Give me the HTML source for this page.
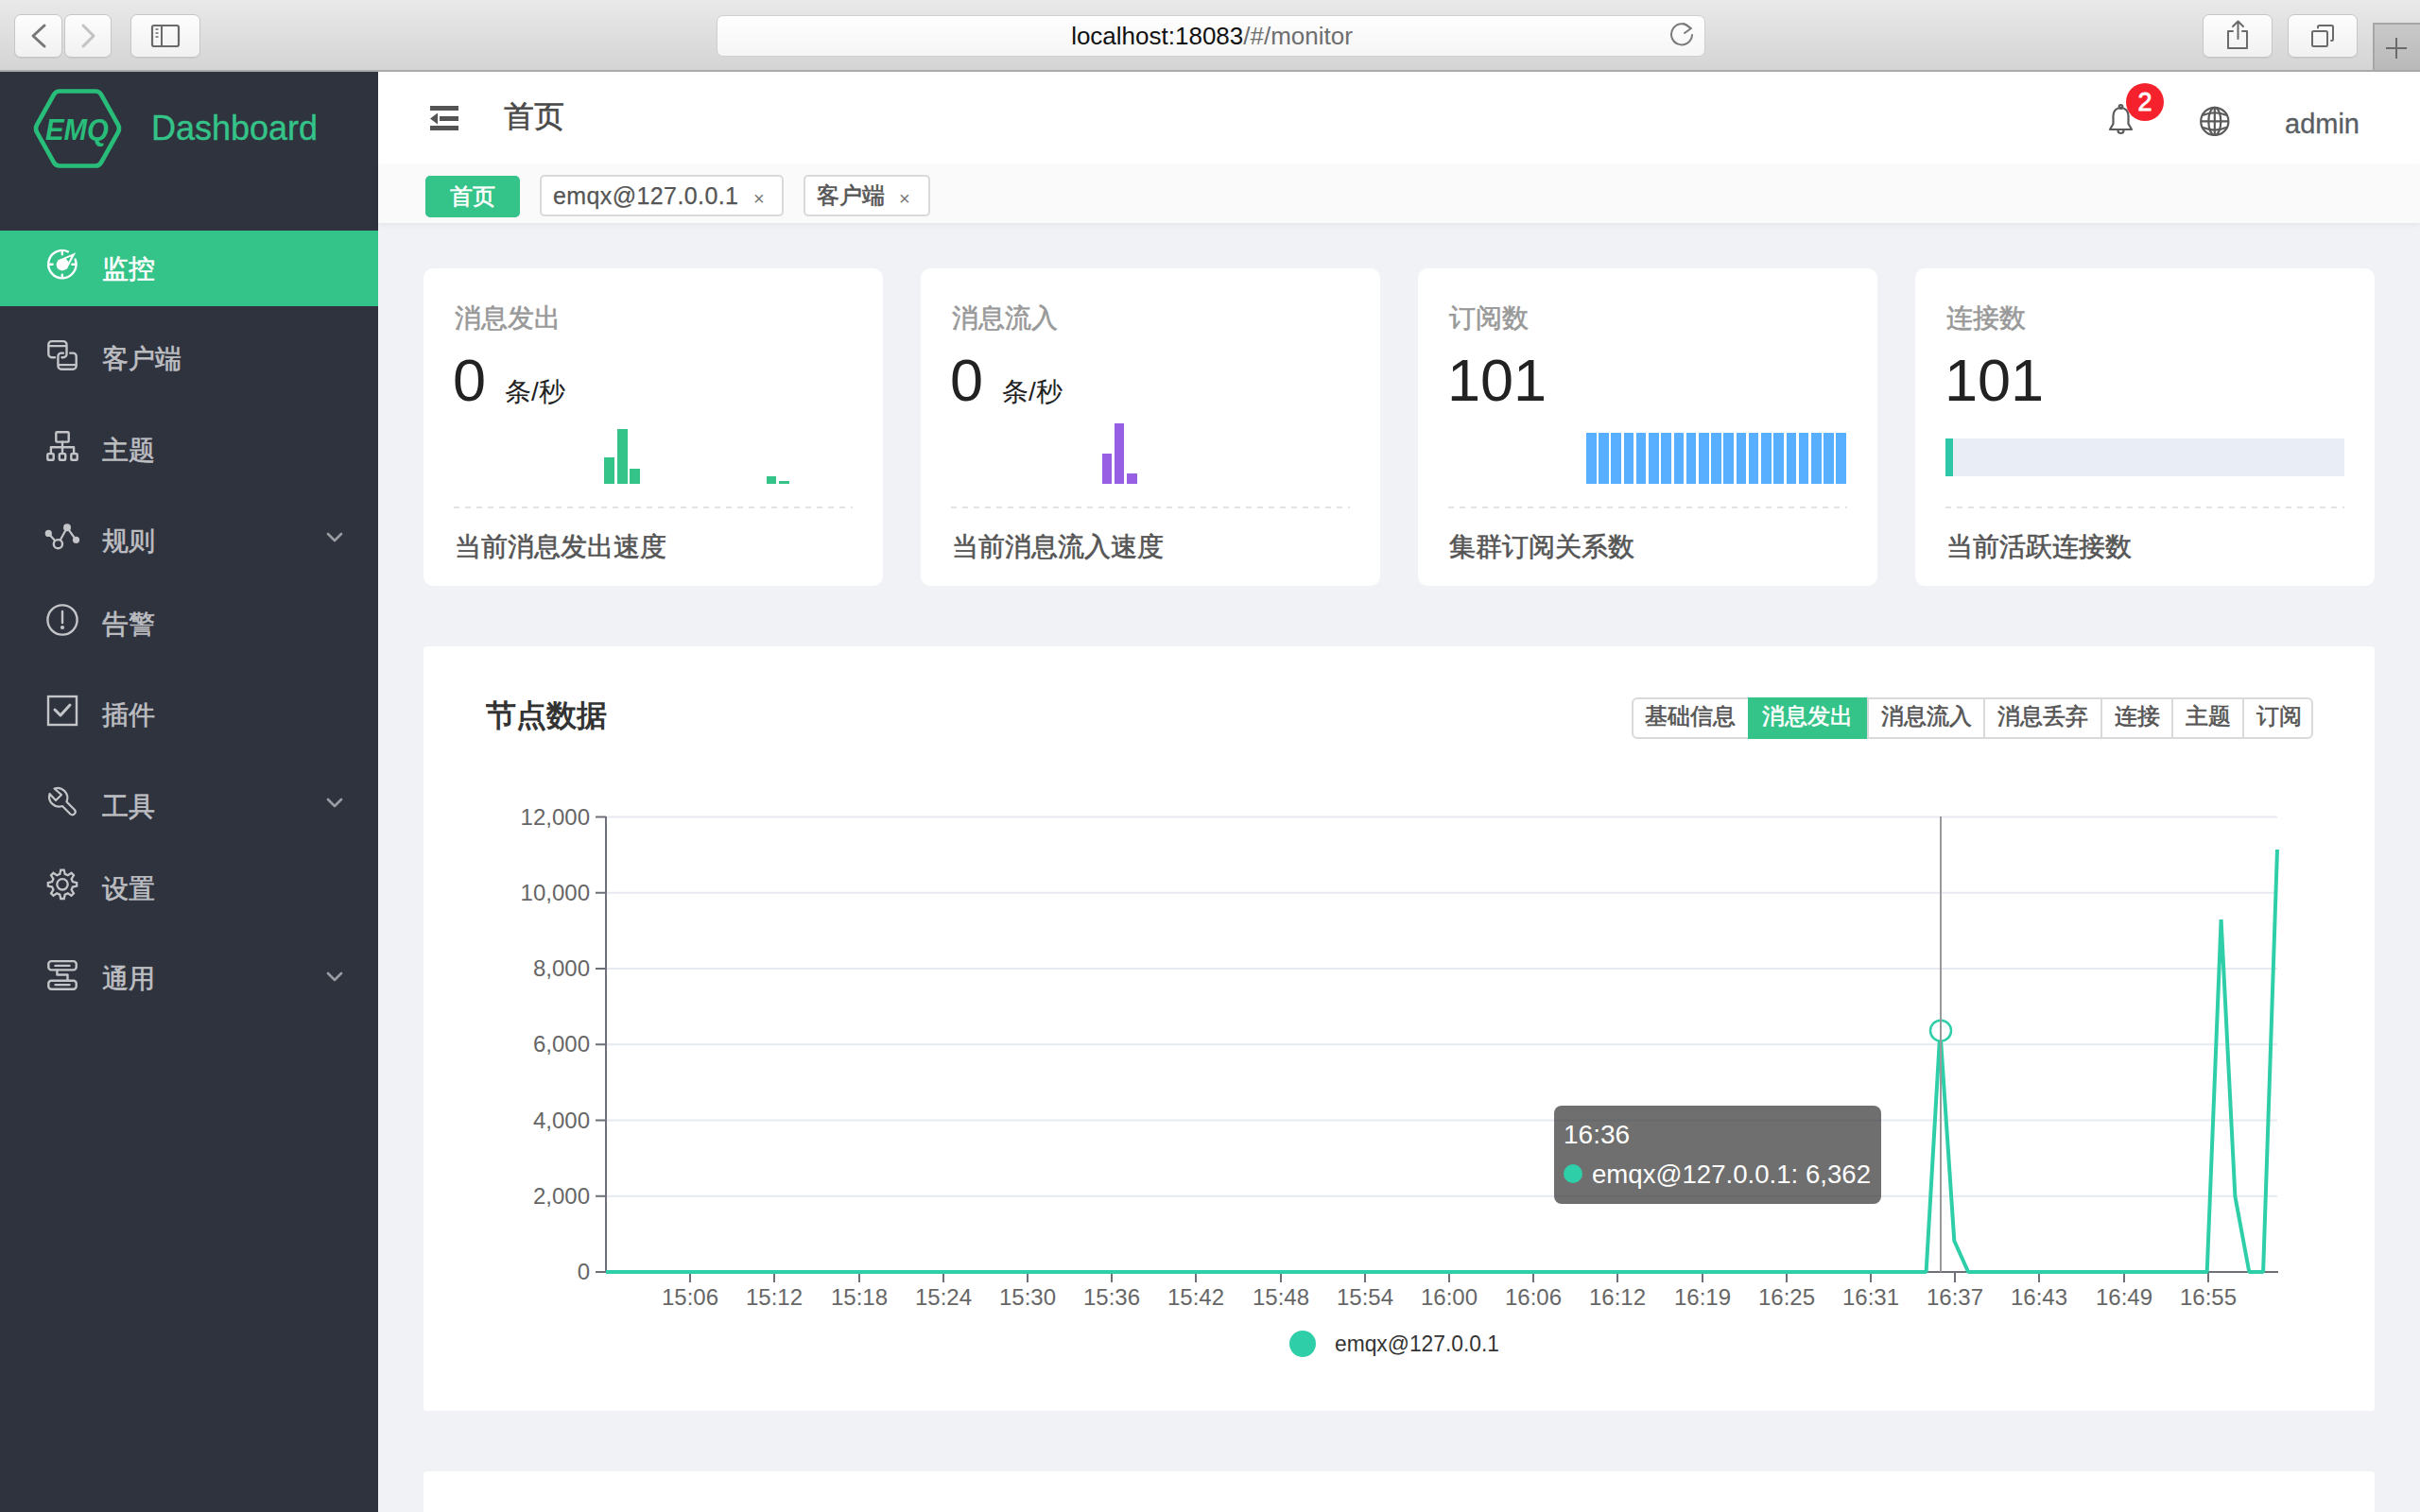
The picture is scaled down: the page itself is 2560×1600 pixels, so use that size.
<!DOCTYPE html>
<html><head><meta charset="utf-8">
<style>
*{margin:0;padding:0;box-sizing:border-box}
html,body{width:2560px;height:1600px;overflow:hidden;background:#f0f2f5;font-family:"Liberation Sans",sans-serif;position:relative}
.a{position:absolute}
/* safari toolbar */
#tb{left:0;top:0;width:2560px;height:74px;background:linear-gradient(#e9e9e9,#d4d4d4)}
#tbl{left:0;top:74px;width:2560px;height:2px;background:#a9a9a9}
.btn{border:1px solid #c6c6c6;border-radius:7px;background:linear-gradient(#fdfdfd,#f1f1f1);box-shadow:0 1px 0 rgba(0,0,0,0.06)}
#url{left:758px;top:16px;width:1046px;height:44px;border:1px solid #cfcfcf;border-radius:7px;background:linear-gradient(#fefefe,#f6f6f6)}
#urltxt{left:0;top:0;width:1046px;text-align:center;line-height:42px;font-size:26px;color:#111}
#urltxt span{color:#6e6e6e}
/* sidebar */
#sb{left:0;top:76px;width:400px;height:1524px;background:#2f333e}
.mi{left:0;width:400px;height:80px}
.mt{left:108px;font-size:28px;color:#bdbec2;line-height:40px}
.zh,.mt,.ct,.cb,.bg,.tag{-webkit-text-stroke-width:0.6px}
.ic{left:48px;width:36px;height:36px}
/* header */
#hd{left:400px;top:76px;width:2160px;height:98px;background:#fff}
#tags{left:400px;top:174px;width:2160px;height:62px;background:#fafafa;box-shadow:0 2px 6px rgba(0,0,0,0.06)}
.tag{height:44px;border:2px solid #d9d9d9;border-radius:5px;background:#fff;font-size:25px;color:#555;line-height:40px}
/* cards */
.card{background:#fff;border-radius:10px}
.ct{font-size:28px;color:#999;line-height:36px}
.cv{font-size:63px;color:#222;line-height:70px}
.cu{font-size:28px;color:#222;line-height:36px}
.cd{height:2px;background:repeating-linear-gradient(90deg,#e3e3e3 0 6px,transparent 6px 12px)}
.cb{font-size:28px;color:#555;line-height:36px}
.sg{font-size:24px;color:#666;line-height:30px}
.bg{height:44px;font-size:24px;color:#555;line-height:40px;text-align:center}
</style></head>
<body>
<div id="tb" class="a">
  <div class="a btn" style="left:15px;top:15px;width:51px;height:46px"></div>
  <div class="a btn" style="left:68px;top:15px;width:50px;height:46px"></div>
  <div class="a btn" style="left:138px;top:15px;width:74px;height:46px"></div>
  <div id="url" class="a"><div id="urltxt" class="a">localhost:18083<span>/#/monitor</span></div></div>
  <div class="a btn" style="left:2330px;top:15px;width:74px;height:46px"></div>
  <div class="a btn" style="left:2420px;top:15px;width:74px;height:46px"></div>
  <div class="a" style="left:2510px;top:24px;width:50px;height:50px;background:linear-gradient(#c9c9c9,#b9b9b9);border-left:2px solid #a6a6a6;border-top:2px solid #a6a6a6"></div>
  <svg class="a" style="left:0;top:0" width="2560" height="74">
    <g fill="none" stroke-linecap="round" stroke-linejoin="round">
      <path d="M47 27 L35 38 L47 49" stroke="#767676" stroke-width="3"/>
      <path d="M88 27 L99 38 L88 49" stroke="#c3c3c3" stroke-width="3"/>
      <rect x="161" y="27" width="28" height="22" rx="2" stroke="#6a6a6a" stroke-width="2.2"/>
      <path d="M171 27 V49" stroke="#6a6a6a" stroke-width="2"/>
      <path d="M164.5 31 H167.5 M164.5 35 H167.5 M164.5 39 H167.5" stroke="#6a6a6a" stroke-width="1.6" stroke-linecap="butt"/>
      <path d="M1788 30 A11 11 0 1 0 1790 37" stroke="#7a7a7a" stroke-width="2"/>
      <path d="M1781 25 L1789 30 L1782 35" stroke="#7a7a7a" stroke-width="2"/>
      <path d="M2362 33 H2357 V51 H2377 V33 H2372" stroke="#6a6a6a" stroke-width="2"/>
      <path d="M2367.5 23 V41 M2362 28 L2367.5 22.5 L2373 28" stroke="#6a6a6a" stroke-width="2"/>
      <rect x="2446" y="33" width="16" height="16" rx="1.5" stroke="#6a6a6a" stroke-width="2"/>
      <path d="M2452 29.5 V28.5 Q2452 27 2453.5 27 H2466.5 Q2468 27 2468 28.5 V41.5 Q2468 43 2466.5 43 H2466" stroke="#6a6a6a" stroke-width="2"/>
      <path d="M2524 51 H2546 M2535 40 V62" stroke="#6a6a6a" stroke-width="2" stroke-linecap="butt"/>
    </g>
  </svg>
</div>
<div id="tbl" class="a"></div>

<div id="sb" class="a">
  <!-- logo -->
  <svg class="a" style="left:0;top:0" width="400" height="150">
    <path d="M63 20.5 H101 Q105 20.5 107 24 L125 56 Q127 60 125 64 L107 96 Q105 99.5 101 99.5 H63 Q59 99.5 57 96 L39 64 Q37 60 39 56 L57 24 Q59 20.5 63 20.5 Z" fill="none" stroke="#29bd7a" stroke-width="4.6"/>
    <text x="48" y="72" font-family="Liberation Sans" font-size="31" font-weight="bold" font-style="italic" fill="#29bd7a" textLength="67" lengthAdjust="spacingAndGlyphs">EMQ</text>
  </svg>
  <div class="a" style="left:160px;top:38px;font-size:36px;color:#34c388;line-height:44px;-webkit-text-stroke-width:0.4px">Dashboard</div>
  <div class="a mi" style="top:168px;background:#34c388"></div>
  <div class="a mt" style="top:189px;color:#fff">监控</div>
  <div class="a mt" style="top:284px">客户端</div>
  <div class="a mt" style="top:381px">主题</div>
  <div class="a mt" style="top:477px">规则</div>
  <div class="a mt" style="top:565px">告警</div>
  <div class="a mt" style="top:661px">插件</div>
  <div class="a mt" style="top:758px">工具</div>
  <div class="a mt" style="top:845px">设置</div>
  <div class="a mt" style="top:940px">通用</div>

</div>

<svg class="a" style="left:0;top:0" width="400" height="1100">
  <g fill="none" stroke="#c4c5c8" stroke-width="2.4" stroke-linecap="round" stroke-linejoin="round">
    <g stroke="#fff" fill="none">
      <path d="M72 266.3 A14.7 14.7 0 1 0 79.6 274.5"/>
      <path d="M65.8 266.5 V269.2 M52.5 279.8 H55.6 M76.3 279.8 H79.2 M65.8 290.7 V293.5"/>
      <circle cx="65.8" cy="280.2" r="6.2" fill="#fff" stroke="none"/>
      <path fill="#fff" stroke="none" fill-rule="evenodd" d="M61 275.6 L80.2 267.2 L70.6 285 Z M69.8 273.8 L75.2 271.4 L72.6 277.3 Z"/>
    </g>
    <path d="M58 378.2 H54.8 A3.5 3.5 0 0 1 51.3 374.7 V364.6 A3.5 3.5 0 0 1 54.8 361.1 H67 A3.5 3.5 0 0 1 70.5 364.6 V374.7 A3.5 3.5 0 0 1 67 378.2 H65.5 M51.3 366.1 H70.5"/>
    <path d="M67 373.6 H64.9 A3.5 3.5 0 0 0 61.4 377.1 V387.2 A3.5 3.5 0 0 0 64.9 390.7 H77.2 A3.5 3.5 0 0 0 80.7 387.2 V377.1 A3.5 3.5 0 0 0 77.2 373.6 H74.2 M61.4 386.1 H80.7"/>
    <rect x="59.3" y="457.3" width="13.4" height="10.3" rx="1"/>
    <path d="M66 467.6 V479 M53.9 479 V473.2 H78.1 V479"/>
    <rect x="50.3" y="480.1" width="6.4" height="6.6" rx="1"/>
    <rect x="62.8" y="480.1" width="6.4" height="6.6" rx="1"/>
    <rect x="75.3" y="480.1" width="6.4" height="6.6" rx="1"/>
    <path d="M51.3 564.4 L61.4 575.7 L71 558.3 L80.5 571.3" stroke-width="2.2"/>
    <circle cx="51.3" cy="564.4" r="3.6" fill="#c4c5c8" stroke="none"/>
    <circle cx="71" cy="558.3" r="4" fill="#c4c5c8" stroke="none"/>
    <circle cx="80.5" cy="571.3" r="3.6" fill="#c4c5c8" stroke="none"/>
    <circle cx="61.4" cy="575.7" r="4.6" fill="#2f333e"/>
    <circle cx="66" cy="656" r="15.6"/>
    <path d="M66 647 V659"/>
    <circle cx="66" cy="664" r="0.9" fill="#c4c5c8"/>
    <rect x="51" y="737" width="30" height="30" stroke-linejoin="miter"/>
    <path d="M58 751 L64 757 L74 746" stroke-width="3"/>
    <path d="M57.5 834.5 L65 841 L59 847 L52.5 840 A10.5 10.5 0 0 0 66 853 L74.5 861.5 A3.2 3.2 0 0 0 79 857 L70.5 848.5 A10.5 10.5 0 0 0 57.5 834.5 Z" stroke-width="2.2"/>
    <path d="M63.29 924.93 L64.27 920.60 L67.73 920.60 L68.71 924.93 L71.77 926.20 L75.52 923.83 L77.97 926.28 L75.60 930.03 L76.87 933.09 L81.20 934.07 L81.20 937.53 L76.87 938.51 L75.60 941.57 L77.97 945.32 L75.52 947.77 L71.77 945.40 L68.71 946.67 L67.73 951.00 L64.27 951.00 L63.29 946.67 L60.23 945.40 L56.48 947.77 L54.03 945.32 L56.40 941.57 L55.13 938.51 L50.80 937.53 L50.80 934.07 L55.13 933.09 L56.40 930.03 L54.03 926.28 L56.48 923.83 L60.23 926.20 Z" stroke-width="2.3" stroke-linejoin="miter"/>
    <circle cx="66" cy="935.8" r="5.7" stroke-width="2.3"/>
    <rect x="51.3" y="1017.1" width="29.4" height="9.3" rx="3"/>
    <rect x="51.3" y="1037.7" width="29.4" height="9" rx="3"/>
    <path d="M58.5 1021.9 H73.5 M58.5 1042.1 H73.5"/>
    <path d="M60.4 1026.4 V1031.5 H71.5 V1037.7" stroke-linejoin="round"/>
    <path d="M347 565 L354 572 L361 565 M347 846 L354 853 L361 846 M347 1030 L354 1037 L361 1030" stroke="#9a9ca2" stroke-width="2.6"/>
  </g>
</svg>

<div id="hd" class="a">
  <svg class="a" style="left:0;top:0" width="2160" height="98">
    <g fill="#545454">
      <rect x="55" y="36" width="30" height="5"/>
      <rect x="65" y="47" width="20" height="5"/>
      <rect x="55" y="57" width="30" height="5"/>
      <path d="M55 49.5 L63 43.5 V55.5 Z"/>
    </g>
    <g fill="none" stroke="#5a5a5a" stroke-width="2.2" stroke-linejoin="round">
      <path d="M1832 61 H1855 L1851.5 55 V46 A8 8 0 0 0 1835.5 46 V55 Z"/>
      <path d="M1840.5 62 A3 3 0 0 0 1846.5 62"/>
      <circle cx="1843.5" cy="37" r="1.8"/>
      <circle cx="1942.8" cy="52.4" r="14.6"/>
      <ellipse cx="1942.8" cy="52.4" rx="6.5" ry="14.6"/>
      <path d="M1942.8 37.8 V67 M1930 46 Q1942.8 40.5 1955.6 46 M1930 58.8 Q1942.8 64.3 1955.6 58.8 M1928.2 52.4 H1957.4"/>
    </g>
    <circle cx="1869" cy="32" r="20" fill="#f5222d"/>
    <text x="1869" y="41" text-anchor="middle" font-family="Liberation Sans" font-size="27" fill="#fff" stroke="#fff" stroke-width="0.8">2</text>
  </svg>
  <div class="a zh" style="left:133px;top:27px;font-size:32px;color:#4a4a4a;line-height:40px">首页</div>
  <div class="a" style="left:2017px;top:37px;font-size:29px;color:#595d64;line-height:36px;-webkit-text-stroke-width:0.3px">admin</div>
</div>
<div id="tags" class="a">
  <div class="a tag" style="left:50px;top:12px;width:100px;background:#34c388;border-color:#34c388;color:#fff;text-align:center;font-size:24px;">首页</div>
  <div class="a tag" style="left:171px;top:11px;width:258px;padding-left:12px;-webkit-text-stroke-width:0.25px;letter-spacing:0.4px">emqx@127.0.0.1<span class="a" style="left:224px;top:3px;font-size:20px;color:#777;-webkit-text-stroke-width:0">×</span></div>
  <div class="a tag" style="left:450px;top:11px;width:134px;padding-left:12px;;font-size:24px">客户端<span class="a" style="left:99px;top:3px;font-size:20px;color:#777;-webkit-text-stroke-width:0">×</span></div>
</div>

<!-- stat cards -->
<div class="a card" style="left:448px;top:284px;width:486px;height:336px">
  <div class="a ct" style="left:33px;top:35px">消息发出</div>
  <div class="a cv" style="left:31px;top:83px">0</div>
  <div class="a cu" style="left:86px;top:113px">条/秒</div>
  <div class="a" style="left:191px;top:200px;width:11px;height:28px;background:#34c388"></div>
  <div class="a" style="left:205px;top:170px;width:11px;height:58px;background:#34c388"></div>
  <div class="a" style="left:218px;top:212px;width:11px;height:16px;background:#34c388"></div>
  <div class="a" style="left:363px;top:220px;width:10px;height:8px;background:#34c388"></div>
  <div class="a" style="left:376px;top:225px;width:11px;height:3px;background:#34c388"></div>
  <div class="a cd" style="left:32px;top:252px;width:422px"></div>
  <div class="a cb" style="left:33px;top:277px">当前消息发出速度</div>
</div>
<div class="a card" style="left:974px;top:284px;width:486px;height:336px">
  <div class="a ct" style="left:33px;top:35px">消息流入</div>
  <div class="a cv" style="left:31px;top:83px">0</div>
  <div class="a cu" style="left:86px;top:113px">条/秒</div>
  <div class="a" style="left:192px;top:196px;width:10px;height:32px;background:#975fe4"></div>
  <div class="a" style="left:205px;top:164px;width:10px;height:64px;background:#975fe4"></div>
  <div class="a" style="left:218px;top:217px;width:11px;height:11px;background:#975fe4"></div>
  <div class="a cd" style="left:32px;top:252px;width:422px"></div>
  <div class="a cb" style="left:33px;top:277px">当前消息流入速度</div>
</div>
<div class="a card" style="left:1500px;top:284px;width:486px;height:336px">
  <div class="a ct" style="left:33px;top:35px">订阅数</div>
  <div class="a cv" style="left:31px;top:83px">101</div>
  <div class="a" style="left:178px;top:174px;width:275px;height:54px;background:repeating-linear-gradient(90deg,#58afff 0 10.6px,#fff 10.6px 13.22px)"></div>
  <div class="a cd" style="left:32px;top:252px;width:422px"></div>
  <div class="a cb" style="left:33px;top:277px">集群订阅关系数</div>
</div>
<div class="a card" style="left:2026px;top:284px;width:486px;height:336px">
  <div class="a ct" style="left:33px;top:35px">连接数</div>
  <div class="a cv" style="left:31px;top:83px">101</div>
  <div class="a" style="left:32px;top:180px;width:422px;height:40px;background:#e9edf5"></div>
  <div class="a" style="left:32px;top:180px;width:8px;height:40px;background:#2ec7a8"></div>
  <div class="a cd" style="left:32px;top:252px;width:422px"></div>
  <div class="a cb" style="left:33px;top:277px">当前活跃连接数</div>
</div>

<!-- chart card -->
<div class="a card" style="left:448px;top:684px;width:2064px;height:809px;border-radius:4px"></div>
<div class="a" style="left:514px;top:737px;font-size:32px;color:#333;line-height:40px;font-weight:bold">节点数据</div>
<div class="a" style="left:1726px;top:738px;width:721px;height:44px;border:2px solid #d9d9d9;border-radius:6px"></div>
<div class="a bg" style="left:1726px;top:738px;width:123px">基础信息</div>
<div class="a bg" style="left:1849px;top:738px;width:126px;background:#34c388;color:#fff">消息发出</div>
<div class="a bg" style="left:1975px;top:738px;width:123px;border-left:2px solid #d9d9d9">消息流入</div>
<div class="a bg" style="left:2098px;top:738px;width:124px;border-left:2px solid #d9d9d9">消息丢弃</div>
<div class="a bg" style="left:2222px;top:738px;width:75px;border-left:2px solid #d9d9d9">连接</div>
<div class="a bg" style="left:2297px;top:738px;width:75px;border-left:2px solid #d9d9d9">主题</div>
<div class="a bg" style="left:2372px;top:738px;width:75px;border-left:2px solid #d9d9d9">订阅</div>

<svg class="a" style="left:0;top:0" width="2560" height="1600" id="chart">
  <g stroke="#e6e9f0" stroke-width="2">
    <path d="M642 864.5 H2409 M642 944.75 H2409 M642 1025 H2409 M642 1105.25 H2409 M642 1185.5 H2409 M642 1265.75 H2409"/>
  </g>
  <g stroke="#6e7079" stroke-width="2" fill="none">
    <path d="M641 864 V1347 M641 1346 H2410"/>
    <path d="M630 864.5 H641 M630 944.75 H641 M630 1025 H641 M630 1105.25 H641 M630 1185.5 H641 M630 1265.75 H641 M630 1346 H641"/>
    <path d="M730 1346 V1357 M819 1346 V1357 M909 1346 V1357 M998 1346 V1357 M1087 1346 V1357 M1176 1346 V1357 M1265 1346 V1357 M1355 1346 V1357 M1444 1346 V1357 M1533 1346 V1357 M1622 1346 V1357 M1711 1346 V1357 M1801 1346 V1357 M1890 1346 V1357 M1979 1346 V1357 M2068 1346 V1357 M2157 1346 V1357 M2247 1346 V1357 M2336 1346 V1357"/>
  </g>
  <g font-family="Liberation Sans" font-size="24" fill="#666" text-anchor="end">
    <text x="624" y="873">12,000</text>
    <text x="624" y="953">10,000</text>
    <text x="624" y="1033">8,000</text>
    <text x="624" y="1113">6,000</text>
    <text x="624" y="1194">4,000</text>
    <text x="624" y="1274">2,000</text>
    <text x="624" y="1354">0</text>
  </g>
  <g font-family="Liberation Sans" font-size="24" fill="#666" text-anchor="middle">
    <text x="730" y="1381">15:06</text>
    <text x="819" y="1381">15:12</text>
    <text x="909" y="1381">15:18</text>
    <text x="998" y="1381">15:24</text>
    <text x="1087" y="1381">15:30</text>
    <text x="1176" y="1381">15:36</text>
    <text x="1265" y="1381">15:42</text>
    <text x="1355" y="1381">15:48</text>
    <text x="1444" y="1381">15:54</text>
    <text x="1533" y="1381">16:00</text>
    <text x="1622" y="1381">16:06</text>
    <text x="1711" y="1381">16:12</text>
    <text x="1801" y="1381">16:19</text>
    <text x="1890" y="1381">16:25</text>
    <text x="1979" y="1381">16:31</text>
    <text x="2068" y="1381">16:37</text>
    <text x="2157" y="1381">16:43</text>
    <text x="2247" y="1381">16:49</text>
    <text x="2336" y="1381">16:55</text>
  </g>
  <polyline fill="none" stroke="#2ecfa8" stroke-width="4" stroke-linejoin="bevel" points="641.0,1346.0 2037.6,1346.0 2052.4,1090.7 2067.3,1313.0 2082.1,1346.0 2334.7,1346.0 2349.6,973.0 2364.4,1266.0 2379.3,1346.0 2394.1,1346.0 2409.0,899.0"/>
  <circle cx="2053" cy="1090.7" r="11" fill="#fff" stroke="#2ecfa8" stroke-width="2.5"/>
  <path d="M2053 864 V1346" stroke="#999" stroke-width="2"/>
  <circle cx="1378" cy="1422" r="14" fill="#2ecfa8"/>
  <text x="1412" y="1430" font-family="Liberation Sans" font-size="24" fill="#333" textLength="174" lengthAdjust="spacingAndGlyphs">emqx@127.0.0.1</text>
  <rect x="1644" y="1170" width="346" height="104" rx="8" fill="rgba(50,50,50,0.7)"/>
  <text x="1654" y="1210" font-family="Liberation Sans" font-size="28" fill="#fff">16:36</text>
  <circle cx="1664" cy="1242" r="10" fill="#2ecfa8"/>
  <text x="1684" y="1252" font-family="Liberation Sans" font-size="28" fill="#fff" textLength="295" lengthAdjust="spacingAndGlyphs">emqx@127.0.0.1: 6,362</text>
</svg>

<div class="a card" style="left:448px;top:1557px;width:2064px;height:100px;border-radius:4px"></div>
</body></html>
